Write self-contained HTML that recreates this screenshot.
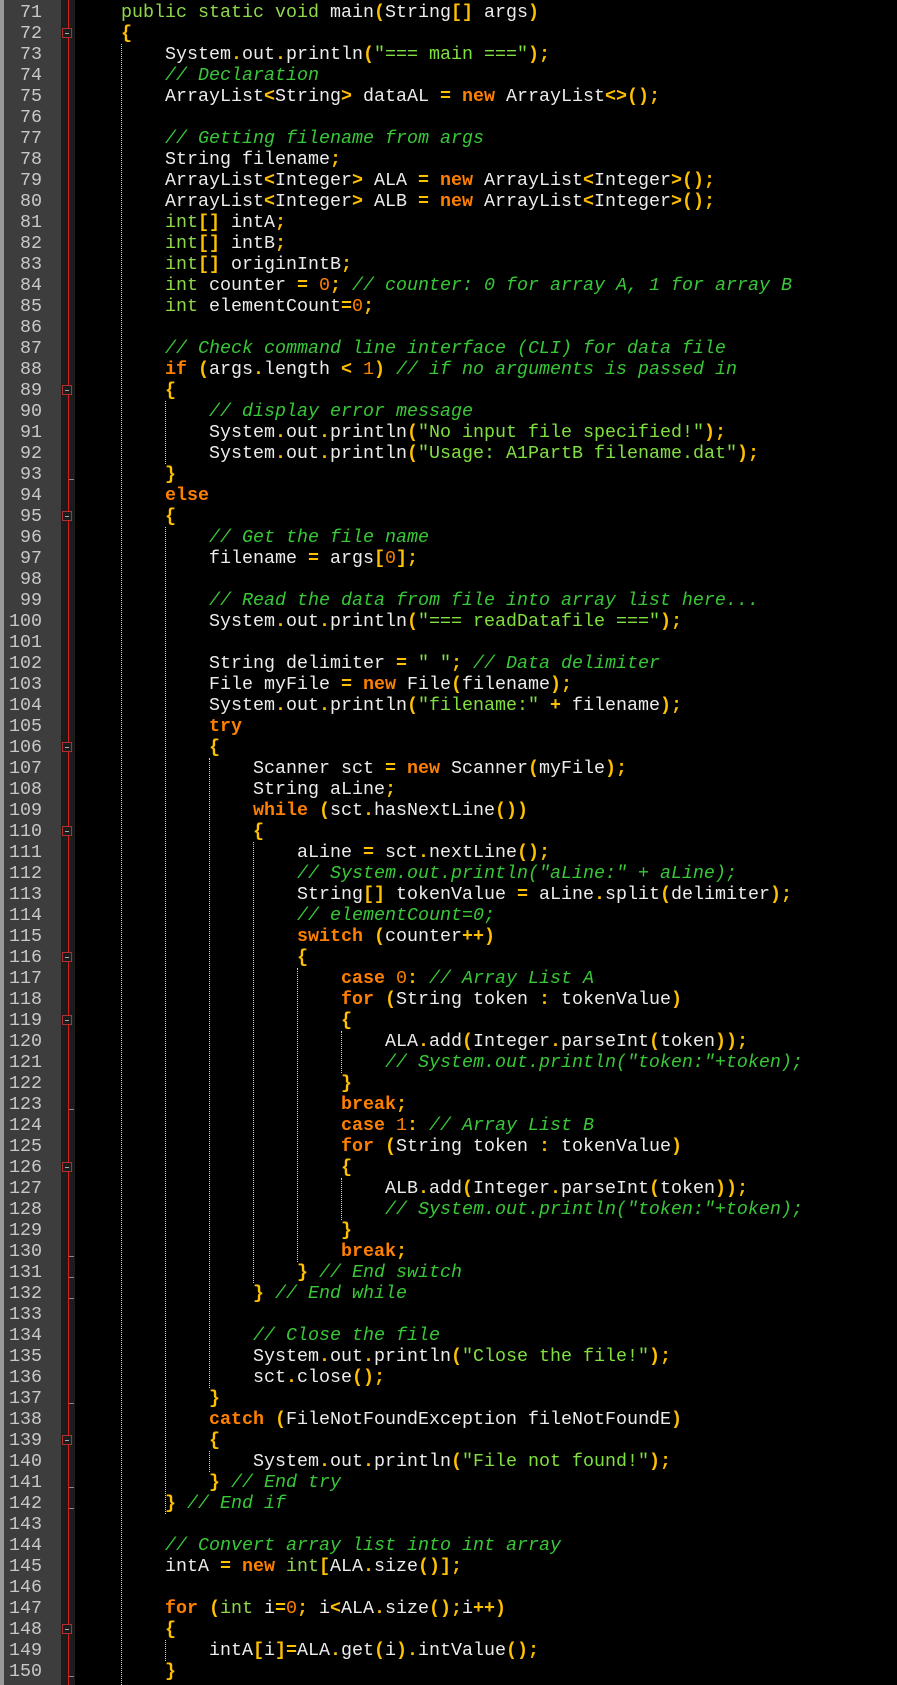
<!DOCTYPE html>
<html><head><meta charset="utf-8">
<style>
html,body{margin:0;padding:0;background:#000;}
body{width:897px;height:1685px;position:relative;overflow:hidden;}
#lb{position:absolute;left:0;top:0;width:4px;height:1685px;background:#9a9a9a;}
#ln{position:absolute;left:4px;top:0;width:57px;height:1685px;background:#3d3d3d;}
#fm{position:absolute;left:61px;top:0;width:14px;height:1685px;background:#1c1c1c;}
#rl{position:absolute;left:68px;top:0;width:1px;height:1685px;background:#d02020;}
.nums,.code{position:absolute;top:2px;font-family:"Liberation Mono",monospace;font-size:18.33px;line-height:21px;white-space:pre;}
.nums{left:0;width:42px;text-align:right;color:#c8c8c8;}
.code{left:77px;color:#ececec;}
.k{color:#ff8000;font-weight:bold;}
.t{color:#8fd84a;}
.o{color:#ffc000;font-weight:bold;}
.s{color:#80e040;}
.c{color:#38c838;font-style:italic;}
.n{color:#ff8000;}
.g{position:absolute;width:0;border-left:1px dotted #cfcfcf;}
.fb{position:absolute;left:62px;width:10px;height:10px;border:1px solid #b03030;background:#1c1c1c;box-sizing:border-box;}
.fb:after{content:"";position:absolute;left:2px;top:4px;width:4px;height:1px;background:#aaa;}
.fe{position:absolute;left:69px;width:5px;height:1px;background:#888;}
</style></head><body>
<div id="lb"></div><div id="ln"></div><div id="fm"></div><div id="rl"></div>
<div class="nums">71
72
73
74
75
76
77
78
79
80
81
82
83
84
85
86
87
88
89
90
91
92
93
94
95
96
97
98
99
100
101
102
103
104
105
106
107
108
109
110
111
112
113
114
115
116
117
118
119
120
121
122
123
124
125
126
127
128
129
130
131
132
133
134
135
136
137
138
139
140
141
142
143
144
145
146
147
148
149
150</div>
<div class="g" style="left:121px;top:44px;height:1641px"></div>
<div class="g" style="left:165px;top:401px;height:63px"></div>
<div class="g" style="left:165px;top:527px;height:987px"></div>
<div class="g" style="left:209px;top:758px;height:630px"></div>
<div class="g" style="left:253px;top:842px;height:441px"></div>
<div class="g" style="left:297px;top:968px;height:294px"></div>
<div class="g" style="left:341px;top:1031px;height:42px"></div>
<div class="g" style="left:341px;top:1178px;height:42px"></div>
<div class="g" style="left:209px;top:1451px;height:21px"></div>
<div class="g" style="left:165px;top:1640px;height:21px"></div>
<div class="fb" style="top:28px"></div>
<div class="fb" style="top:385px"></div>
<div class="fb" style="top:511px"></div>
<div class="fb" style="top:742px"></div>
<div class="fb" style="top:826px"></div>
<div class="fb" style="top:952px"></div>
<div class="fb" style="top:1015px"></div>
<div class="fb" style="top:1162px"></div>
<div class="fb" style="top:1435px"></div>
<div class="fb" style="top:1624px"></div>
<div class="fe" style="top:479px"></div>
<div class="fe" style="top:1109px"></div>
<div class="fe" style="top:1256px"></div>
<div class="fe" style="top:1277px"></div>
<div class="fe" style="top:1298px"></div>
<div class="fe" style="top:1403px"></div>
<div class="fe" style="top:1487px"></div>
<div class="fe" style="top:1508px"></div>
<div class="fe" style="top:1676px"></div>
<div class="code">    <span class="t">public static void</span> main<span class="o">(</span>String<span class="o">[]</span> args<span class="o">)</span>
    <span class="o">{</span>
        System<span class="o">.</span>out<span class="o">.</span>println<span class="o">(</span><span class="s">"=== main ==="</span><span class="o">);</span>
        <span class="c">// Declaration</span>
        ArrayList<span class="o">&lt;</span>String<span class="o">&gt;</span> dataAL <span class="o">=</span> <span class="k">new</span> ArrayList<span class="o">&lt;&gt;();</span>

        <span class="c">// Getting filename from args</span>
        String filename<span class="o">;</span>
        ArrayList<span class="o">&lt;</span>Integer<span class="o">&gt;</span> ALA <span class="o">=</span> <span class="k">new</span> ArrayList<span class="o">&lt;</span>Integer<span class="o">&gt;();</span>
        ArrayList<span class="o">&lt;</span>Integer<span class="o">&gt;</span> ALB <span class="o">=</span> <span class="k">new</span> ArrayList<span class="o">&lt;</span>Integer<span class="o">&gt;();</span>
        <span class="t">int</span><span class="o">[]</span> intA<span class="o">;</span>
        <span class="t">int</span><span class="o">[]</span> intB<span class="o">;</span>
        <span class="t">int</span><span class="o">[]</span> originIntB<span class="o">;</span>
        <span class="t">int</span> counter <span class="o">=</span> <span class="n">0</span><span class="o">;</span> <span class="c">// counter: 0 for array A, 1 for array B</span>
        <span class="t">int</span> elementCount<span class="o">=</span><span class="n">0</span><span class="o">;</span>

        <span class="c">// Check command line interface (CLI) for data file</span>
        <span class="k">if</span> <span class="o">(</span>args<span class="o">.</span>length <span class="o">&lt;</span> <span class="n">1</span><span class="o">)</span> <span class="c">// if no arguments is passed in</span>
        <span class="o">{</span>
            <span class="c">// display error message</span>
            System<span class="o">.</span>out<span class="o">.</span>println<span class="o">(</span><span class="s">"No input file specified!"</span><span class="o">);</span>
            System<span class="o">.</span>out<span class="o">.</span>println<span class="o">(</span><span class="s">"Usage: A1PartB filename.dat"</span><span class="o">);</span>
        <span class="o">}</span>
        <span class="k">else</span>
        <span class="o">{</span>
            <span class="c">// Get the file name</span>
            filename <span class="o">=</span> args<span class="o">[</span><span class="n">0</span><span class="o">];</span>

            <span class="c">// Read the data from file into array list here...</span>
            System<span class="o">.</span>out<span class="o">.</span>println<span class="o">(</span><span class="s">"=== readDatafile ==="</span><span class="o">);</span>

            String delimiter <span class="o">=</span> <span class="s">" "</span><span class="o">;</span> <span class="c">// Data delimiter</span>
            File myFile <span class="o">=</span> <span class="k">new</span> File<span class="o">(</span>filename<span class="o">);</span>
            System<span class="o">.</span>out<span class="o">.</span>println<span class="o">(</span><span class="s">"filename:"</span> <span class="o">+</span> filename<span class="o">);</span>
            <span class="k">try</span>
            <span class="o">{</span>
                Scanner sct <span class="o">=</span> <span class="k">new</span> Scanner<span class="o">(</span>myFile<span class="o">);</span>
                String aLine<span class="o">;</span>
                <span class="k">while</span> <span class="o">(</span>sct<span class="o">.</span>hasNextLine<span class="o">())</span>
                <span class="o">{</span>
                    aLine <span class="o">=</span> sct<span class="o">.</span>nextLine<span class="o">();</span>
                    <span class="c">// System.out.println("aLine:" + aLine);</span>
                    String<span class="o">[]</span> tokenValue <span class="o">=</span> aLine<span class="o">.</span>split<span class="o">(</span>delimiter<span class="o">);</span>
                    <span class="c">// elementCount=0;</span>
                    <span class="k">switch</span> <span class="o">(</span>counter<span class="o">++)</span>
                    <span class="o">{</span>
                        <span class="k">case</span> <span class="n">0</span><span class="o">:</span> <span class="c">// Array List A</span>
                        <span class="k">for</span> <span class="o">(</span>String token <span class="o">:</span> tokenValue<span class="o">)</span>
                        <span class="o">{</span>
                            ALA<span class="o">.</span>add<span class="o">(</span>Integer<span class="o">.</span>parseInt<span class="o">(</span>token<span class="o">));</span>
                            <span class="c">// System.out.println("token:"+token);</span>
                        <span class="o">}</span>
                        <span class="k">break</span><span class="o">;</span>
                        <span class="k">case</span> <span class="n">1</span><span class="o">:</span> <span class="c">// Array List B</span>
                        <span class="k">for</span> <span class="o">(</span>String token <span class="o">:</span> tokenValue<span class="o">)</span>
                        <span class="o">{</span>
                            ALB<span class="o">.</span>add<span class="o">(</span>Integer<span class="o">.</span>parseInt<span class="o">(</span>token<span class="o">));</span>
                            <span class="c">// System.out.println("token:"+token);</span>
                        <span class="o">}</span>
                        <span class="k">break</span><span class="o">;</span>
                    <span class="o">}</span> <span class="c">// End switch</span>
                <span class="o">}</span> <span class="c">// End while</span>

                <span class="c">// Close the file</span>
                System<span class="o">.</span>out<span class="o">.</span>println<span class="o">(</span><span class="s">"Close the file!"</span><span class="o">);</span>
                sct<span class="o">.</span>close<span class="o">();</span>
            <span class="o">}</span>
            <span class="k">catch</span> <span class="o">(</span>FileNotFoundException fileNotFoundE<span class="o">)</span>
            <span class="o">{</span>
                System<span class="o">.</span>out<span class="o">.</span>println<span class="o">(</span><span class="s">"File not found!"</span><span class="o">);</span>
            <span class="o">}</span> <span class="c">// End try</span>
        <span class="o">}</span> <span class="c">// End if</span>

        <span class="c">// Convert array list into int array</span>
        intA <span class="o">=</span> <span class="k">new</span> <span class="t">int</span><span class="o">[</span>ALA<span class="o">.</span>size<span class="o">()];</span>

        <span class="k">for</span> <span class="o">(</span><span class="t">int</span> i<span class="o">=</span><span class="n">0</span><span class="o">;</span> i<span class="o">&lt;</span>ALA<span class="o">.</span>size<span class="o">();</span>i<span class="o">++)</span>
        <span class="o">{</span>
            intA<span class="o">[</span>i<span class="o">]=</span>ALA<span class="o">.</span>get<span class="o">(</span>i<span class="o">).</span>intValue<span class="o">();</span>
        <span class="o">}</span></div>
</body></html>
